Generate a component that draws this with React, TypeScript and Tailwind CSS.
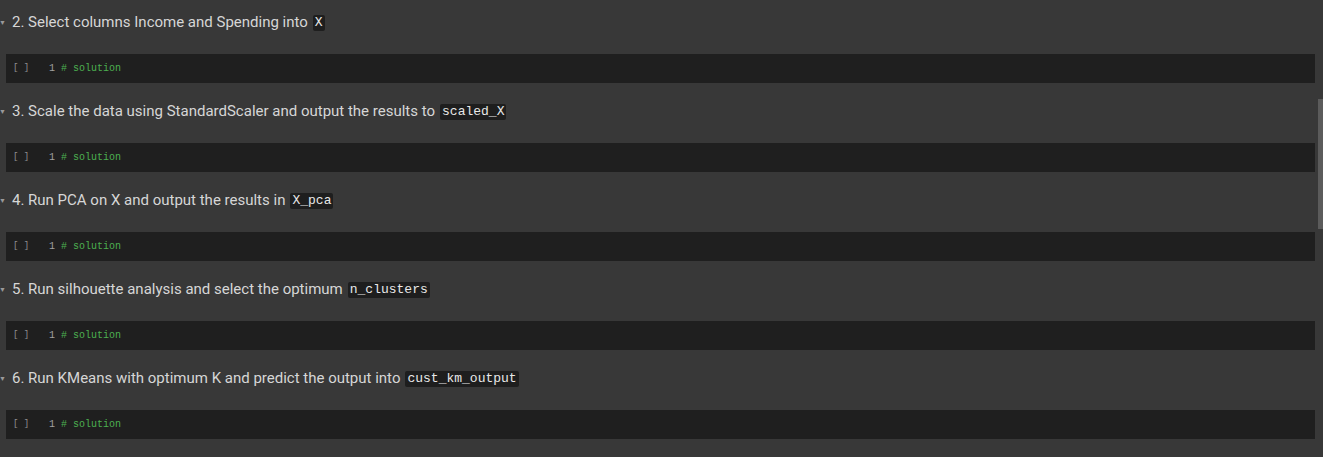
const sections = [
  { text: "2. Select columns Income and Spending into", code: "X" },
  { text: "3. Scale the data using StandardScaler and output the results to", code: "scaled_X" },
  { text: "4. Run PCA on X and output the results in", code: "X_pca" },
  { text: "5. Run silhouette analysis and select the optimum", code: "n_clusters" },
  { text: "6. Run KMeans with optimum K and predict the output into", code: "cust_km_output" },
]

function Section({ text, code }: { text: string; code: string }) {
  return (
    <div className="flex flex-col">
      {/* Markdown heading */}
      <div className="relative flex h-[45px] items-center pl-[12px]">
        <span className="absolute left-[-1px] top-[20px] text-[7px] leading-none text-[#9a9a9a]">▼</span>
        <span className="text-[15px] text-[#d6d6d6]">{text}</span>
        <code className="ml-[5px] rounded-[2px] bg-[#1e1e1e] px-[2px] font-['Liberation_Mono',monospace] text-[13px] leading-[16px] text-[#e8e8e8]">
          {code}
        </code>
      </div>
      {/* Code cell */}
      <div className="mx-[6px] mt-[9px] mb-[6px] flex h-[29px] items-center bg-[#1f1f1f] pr-[8px]">
        <span className="ml-[7px] w-[36px] font-['Liberation_Mono',monospace] text-[9px] text-[#909090]">[ ]</span>
        <span className="whitespace-pre font-['Liberation_Mono',monospace] text-[10px] text-[#a0a0a0]">
          1 <span className="text-[#4caf50]"># solution</span>
        </span>
      </div>
    </div>
  )
}

export default function App() {
  return (
    <div className="relative flex h-[457px] w-[1323px] overflow-hidden bg-[#383838] font-['Roboto',sans-serif]">
      <div className="flex flex-1 flex-col pr-[2px]">
        {sections.map((s) => (
          <Section key={s.code} {...s} />
        ))}
      </div>
      {/* Scrollbar */}
      <div className="absolute right-0 top-[99px] h-[130px] w-[5px] bg-[#5b5b5b]" />
    </div>
  )
}
